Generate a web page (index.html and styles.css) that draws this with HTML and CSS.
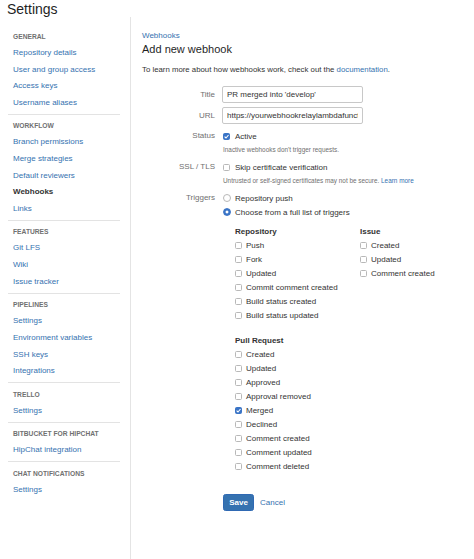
FILE: index.html
```html
<!DOCTYPE html>
<html>
<head>
<meta charset="utf-8">
<title>Settings - Add new webhook</title>
<link rel="stylesheet" href="styles.css">
</head>
<body>
<header class="top"><h1>Settings</h1></header>
<div class="layout">
  <nav class="sidebar">
    <section class="group">
      <h3>GENERAL</h3>
      <a href="#">Repository details</a>
      <a href="#">User and group access</a>
      <a href="#">Access keys</a>
      <a href="#">Username aliases</a>
    </section>
    <section class="group">
      <h3>WORKFLOW</h3>
      <a href="#">Branch permissions</a>
      <a href="#">Merge strategies</a>
      <a href="#">Default reviewers</a>
      <a href="#" class="active">Webhooks</a>
      <a href="#">Links</a>
    </section>
    <section class="group">
      <h3>FEATURES</h3>
      <a href="#">Git LFS</a>
      <a href="#">Wiki</a>
      <a href="#">Issue tracker</a>
    </section>
    <section class="group">
      <h3>PIPELINES</h3>
      <a href="#">Settings</a>
      <a href="#">Environment variables</a>
      <a href="#">SSH keys</a>
      <a href="#">Integrations</a>
    </section>
    <section class="group">
      <h3>TRELLO</h3>
      <a href="#">Settings</a>
    </section>
    <section class="group">
      <h3>BITBUCKET FOR HIPCHAT</h3>
      <a href="#">HipChat integration</a>
    </section>
    <section class="group">
      <h3>CHAT NOTIFICATIONS</h3>
      <a href="#">Settings</a>
    </section>
  </nav>

  <main class="main">
    <a href="#" class="crumb">Webhooks</a>
    <h2>Add new webhook</h2>
    <p class="intro">To learn more about how webhooks work, check out the <a href="#">documentation</a>.</p>

    <form class="form">
      <div class="field f-title">
        <div class="lbl lbl-input">Title</div>
        <div class="ctl"><input class="text" type="text" value="PR merged into 'develop'"></div>
      </div>
      <div class="field f-url">
        <div class="lbl lbl-input">URL</div>
        <div class="ctl"><input class="text" type="text" value="https://yourwebhookrelaylambdafunctixxxxx"></div>
      </div>
      <div class="field f-status">
        <div class="lbl">Status</div>
        <div class="ctl">
          <div class="opt"><span class="cb on"><svg viewBox="0 0 7 7" width="7" height="7"><polyline points="1.6,3.6 3,5 5.5,2" fill="none" stroke="#fff" stroke-width="1.1"/></svg></span>Active</div>
          <div class="help">Inactive webhooks don't trigger requests.</div>
        </div>
      </div>
      <div class="field f-ssl">
        <div class="lbl">SSL / TLS</div>
        <div class="ctl">
          <div class="opt"><span class="cb"></span>Skip certificate verification</div>
          <div class="help">Untrusted or self-signed certificates may not be secure. <a href="#">Learn more</a></div>
        </div>
      </div>
      <div class="field f-trig">
        <div class="lbl">Triggers</div>
        <div class="ctl">
          <div class="opt"><span class="rd"></span>Repository push</div>
          <div class="opt"><span class="rd on"></span>Choose from a full list of triggers</div>

          <div class="trig-grid">
            <div class="col">
              <h4>Repository</h4>
              <div class="item"><span class="cb"></span>Push</div>
              <div class="item"><span class="cb"></span>Fork</div>
              <div class="item"><span class="cb"></span>Updated</div>
              <div class="item"><span class="cb"></span>Commit comment created</div>
              <div class="item"><span class="cb"></span>Build status created</div>
              <div class="item"><span class="cb"></span>Build status updated</div>
            </div>
            <div class="col">
              <h4>Issue</h4>
              <div class="item"><span class="cb"></span>Created</div>
              <div class="item"><span class="cb"></span>Updated</div>
              <div class="item"><span class="cb"></span>Comment created</div>
            </div>
            <div class="col pr">
              <h4>Pull Request</h4>
              <div class="item"><span class="cb"></span>Created</div>
              <div class="item"><span class="cb"></span>Updated</div>
              <div class="item"><span class="cb"></span>Approved</div>
              <div class="item"><span class="cb"></span>Approval removed</div>
              <div class="item"><span class="cb on"><svg viewBox="0 0 7 7" width="7" height="7"><polyline points="1.6,3.6 3,5 5.5,2" fill="none" stroke="#fff" stroke-width="1.1"/></svg></span>Merged</div>
              <div class="item"><span class="cb"></span>Declined</div>
              <div class="item"><span class="cb"></span>Comment created</div>
              <div class="item"><span class="cb"></span>Comment updated</div>
              <div class="item"><span class="cb"></span>Comment deleted</div>
            </div>
          </div>
        </div>
      </div>
      <div class="field f-actions">
        <div class="lbl"></div>
        <div class="ctl actions">
          <button type="button" class="btn">Save</button>
          <a href="#" class="cancel">Cancel</a>
        </div>
      </div>
    </form>
  </main>
</div>
</body>
</html>
```

FILE: styles.css
```css
* { box-sizing: border-box; }

html, body {
  margin: 0;
  padding: 0;
}

body {
  width: 474px;
  height: 559px;
  overflow: hidden;
  background: #fff;
  color: #333;
  font-family: "Liberation Sans", Arial, Helvetica, sans-serif;
}

a { color: #3572b0; text-decoration: none; }

.top {
  height: 17px;
  padding: 1px 0 0 7px;
}
.top h1 {
  margin: 0;
  font-size: 14px;
  line-height: 16px;
  font-weight: normal;
  color: #1f1f1f;
}

.layout {
  display: flex;
  height: 542px;
}

/* Sidebar */
.sidebar {
  width: 131px;
  flex: none;
  border-right: 1px solid #e4e4e4;
  padding: 8.7px 10px 0 8px;
}
.group {
  padding: 2.3px 0 2.5px;
  border-top: 1px solid #e3e3e3;
}
.group:first-child { border-top: none; }
.group h3 {
  margin: 0;
  padding-left: 5px;
  font-size: 6.7px;
  line-height: 17px;
  font-weight: bold;
  color: #707070;
}
.group a {
  display: block;
  padding-left: 5px;
  font-size: 8px;
  line-height: 16.65px;
  color: #3572b0;
}
.group a.active {
  color: #333;
  font-weight: bold;
}

/* Main */
.main {
  flex: 1;
  min-width: 0;
  padding: 12.5px 0 0 11px;
}
.crumb {
  display: block;
  font-size: 8px;
  line-height: 12px;
}
.main h2 {
  margin: 0;
  font-size: 11px;
  line-height: 14px;
  font-weight: normal;
  color: #1f1f1f;
}
.intro {
  margin: 8.5px 0 0;
  font-size: 7.8px;
  line-height: 12px;
  color: #333;
}

.form { margin-top: 10px; }

.field { display: flex; align-items: flex-start; }
.lbl {
  width: 73px;
  flex: none;
  margin-right: 7px;
  text-align: right;
  font-size: 8px;
  line-height: 14px;
  color: #707070;
}
.lbl-input { line-height: 17px; }
.ctl { flex: 1; min-width: 0; }

.f-url { margin-top: 4px; }
.f-status { margin-top: 5px; }
.f-ssl { margin-top: 5px; }
.f-trig { margin-top: 5px; }

.text {
  display: block;
  width: 141px;
  height: 17px;
  margin: 0;
  padding: 0 4px;
  border: 1px solid #c8c8c8;
  border-radius: 2px;
  background: #fff;
  font-family: "Liberation Sans", Arial, Helvetica, sans-serif;
  font-size: 8px;
  color: #333;
  outline: none;
}

.opt {
  display: flex;
  align-items: center;
  height: 14px;
  font-size: 8px;
  color: #333;
}
.opt .cb { margin: 0 5px 0 1px; }
.opt .rd { margin: 0 4px 0 1px; }

.help {
  margin-top: 2px;
  padding-left: 1px;
  font-size: 6.4px;
  line-height: 10px;
  color: #707070;
}

.cb {
  width: 7px;
  height: 7px;
  flex: none;
  display: inline-flex;
  border: 1px solid #b8b8b8;
  border-radius: 1.5px;
  background: #fff;
  overflow: hidden;
}
.cb svg { display: block; margin: -1px; }
.cb.on {
  background: #3a74c6;
  border-color: #3a74c6;
}

.rd {
  width: 8px;
  height: 8px;
  flex: none;
  border: 1px solid #b8b8b8;
  border-radius: 50%;
  background: #fff;
}
.rd.on {
  border-color: #3a74c6;
  background: radial-gradient(circle, #fff 0 1.3px, #3a74c6 1.7px);
}

.trig-grid {
  display: grid;
  grid-template-columns: 125px auto;
  margin: 5.7px 0 0 13px;
}
.col h4 {
  margin: 0;
  font-size: 8px;
  line-height: 14px;
  font-weight: bold;
  color: #333;
}
.item {
  display: flex;
  align-items: center;
  height: 14px;
  font-size: 8px;
  color: #333;
}
.item .cb { margin-right: 4px; }
.pr {
  grid-column: 1 / 3;
  margin-top: 11px;
}

.f-actions { margin-top: 20px; }
.actions {
  display: flex;
  align-items: center;
  gap: 6px;
}
.btn {
  width: 31px;
  height: 17px;
  margin: 0 0 0 1px;
  padding: 0;
  border: 1px solid #2f69b3;
  border-radius: 2.5px;
  background: #3572b0;
  color: #fff;
  font-family: "Liberation Sans", Arial, Helvetica, sans-serif;
  font-size: 8px;
  font-weight: bold;
}
.cancel {
  font-size: 8px;
  color: #3572b0;
}
```
